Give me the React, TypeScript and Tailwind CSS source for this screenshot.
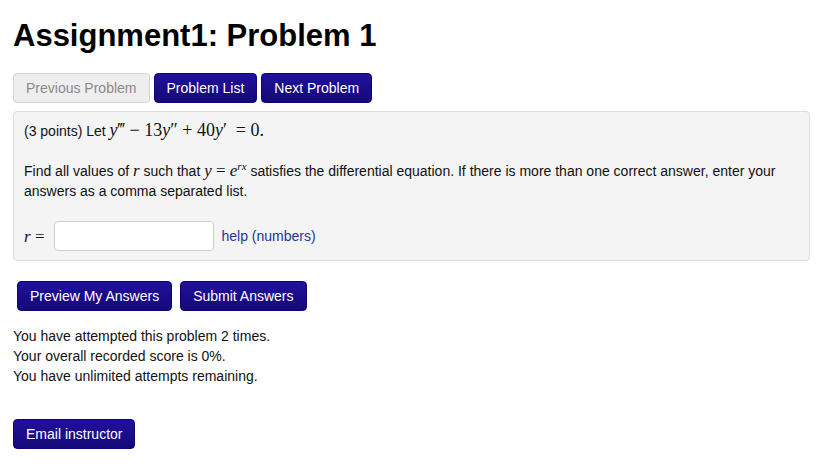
import type { ReactNode } from 'react'

const sans = { fontFamily: '"Liberation Sans", Arial, sans-serif' }

function NavButton({ children, disabled }: { children: ReactNode; disabled?: boolean }) {
  if (disabled) {
    return (
      <button className="h-[30px] px-[12px] rounded-[4px] border border-[#d6d6d6] bg-[#eeeeee] text-[14px] text-[#8a8a8a]">
        {children}
      </button>
    )
  }
  return (
    <button className="h-[30px] px-[12px] rounded-[4px] border border-[#0f0570] bg-gradient-to-b from-[#21109c] to-[#150879] text-[14px] text-white">
      {children}
    </button>
  )
}

function M({ children, big }: { children: ReactNode; big?: boolean }) {
  return (
    <span
      className={big ? 'text-[18px] leading-none' : 'text-[17px] leading-none'}
      style={{ fontFamily: '"Liberation Serif", "Times New Roman", serif' }}
    >
      {children}
    </span>
  )
}

export default function App() {
  return (
    <div className="min-h-screen bg-white px-[13px] text-[#111]" style={sans}>
      <h1 className="pt-[17px] text-[31px] font-bold leading-[38px] text-black">Assignment1: Problem 1</h1>

      <div className="mt-[18px] flex gap-[4px]">
        <NavButton disabled>Previous Problem</NavButton>
        <NavButton>Problem List</NavButton>
        <NavButton>Next Problem</NavButton>
      </div>

      <div className="mt-[8px] w-[797px] rounded-[4px] border border-[#dedede] bg-[#f4f4f4] px-[10px] pt-[9px] pb-[9px] text-[14px] leading-[20px]">
        <p>
          (3 points) Let{' '}
          <M big>
            <i>y</i>‴ − 13<i>y</i>″ + 40<i>y</i>′ &nbsp;= 0.
          </M>
        </p>
        <p className="mt-[20px]">
          Find all values of <M><i>r</i></M> such that{' '}
          <M>
            <i>y</i> = <i>e</i>
            <span className="relative -top-[6px] text-[11px] leading-none"><i>rx</i></span>
          </M>{' '}
          satisfies the differential equation. If there is more than one correct answer, enter your answers as a
          comma separated list.
        </p>
        <div className="mt-[20px] flex items-center">
          <M>
            <i>r</i> =
          </M>
          <input
            className="ml-[10px] h-[30px] w-[160px] rounded-[4px] border border-[#cccccc] bg-white px-2 outline-none"
            type="text"
          />
          <a className="ml-[7px] text-[14px] text-[#1d3699]">help (numbers)</a>
        </div>
      </div>

      <div className="mt-[20px] flex gap-[8px] pl-[4px]">
        <NavButton>Preview My Answers</NavButton>
        <NavButton>Submit Answers</NavButton>
      </div>

      <div className="mt-[15px] text-[14px] leading-[20px] text-[#111]">
        <p>You have attempted this problem 2 times.</p>
        <p>Your overall recorded score is 0%.</p>
        <p>You have unlimited attempts remaining.</p>
      </div>

      <div className="mt-[33px]">
        <NavButton>Email instructor</NavButton>
      </div>
    </div>
  )
}
